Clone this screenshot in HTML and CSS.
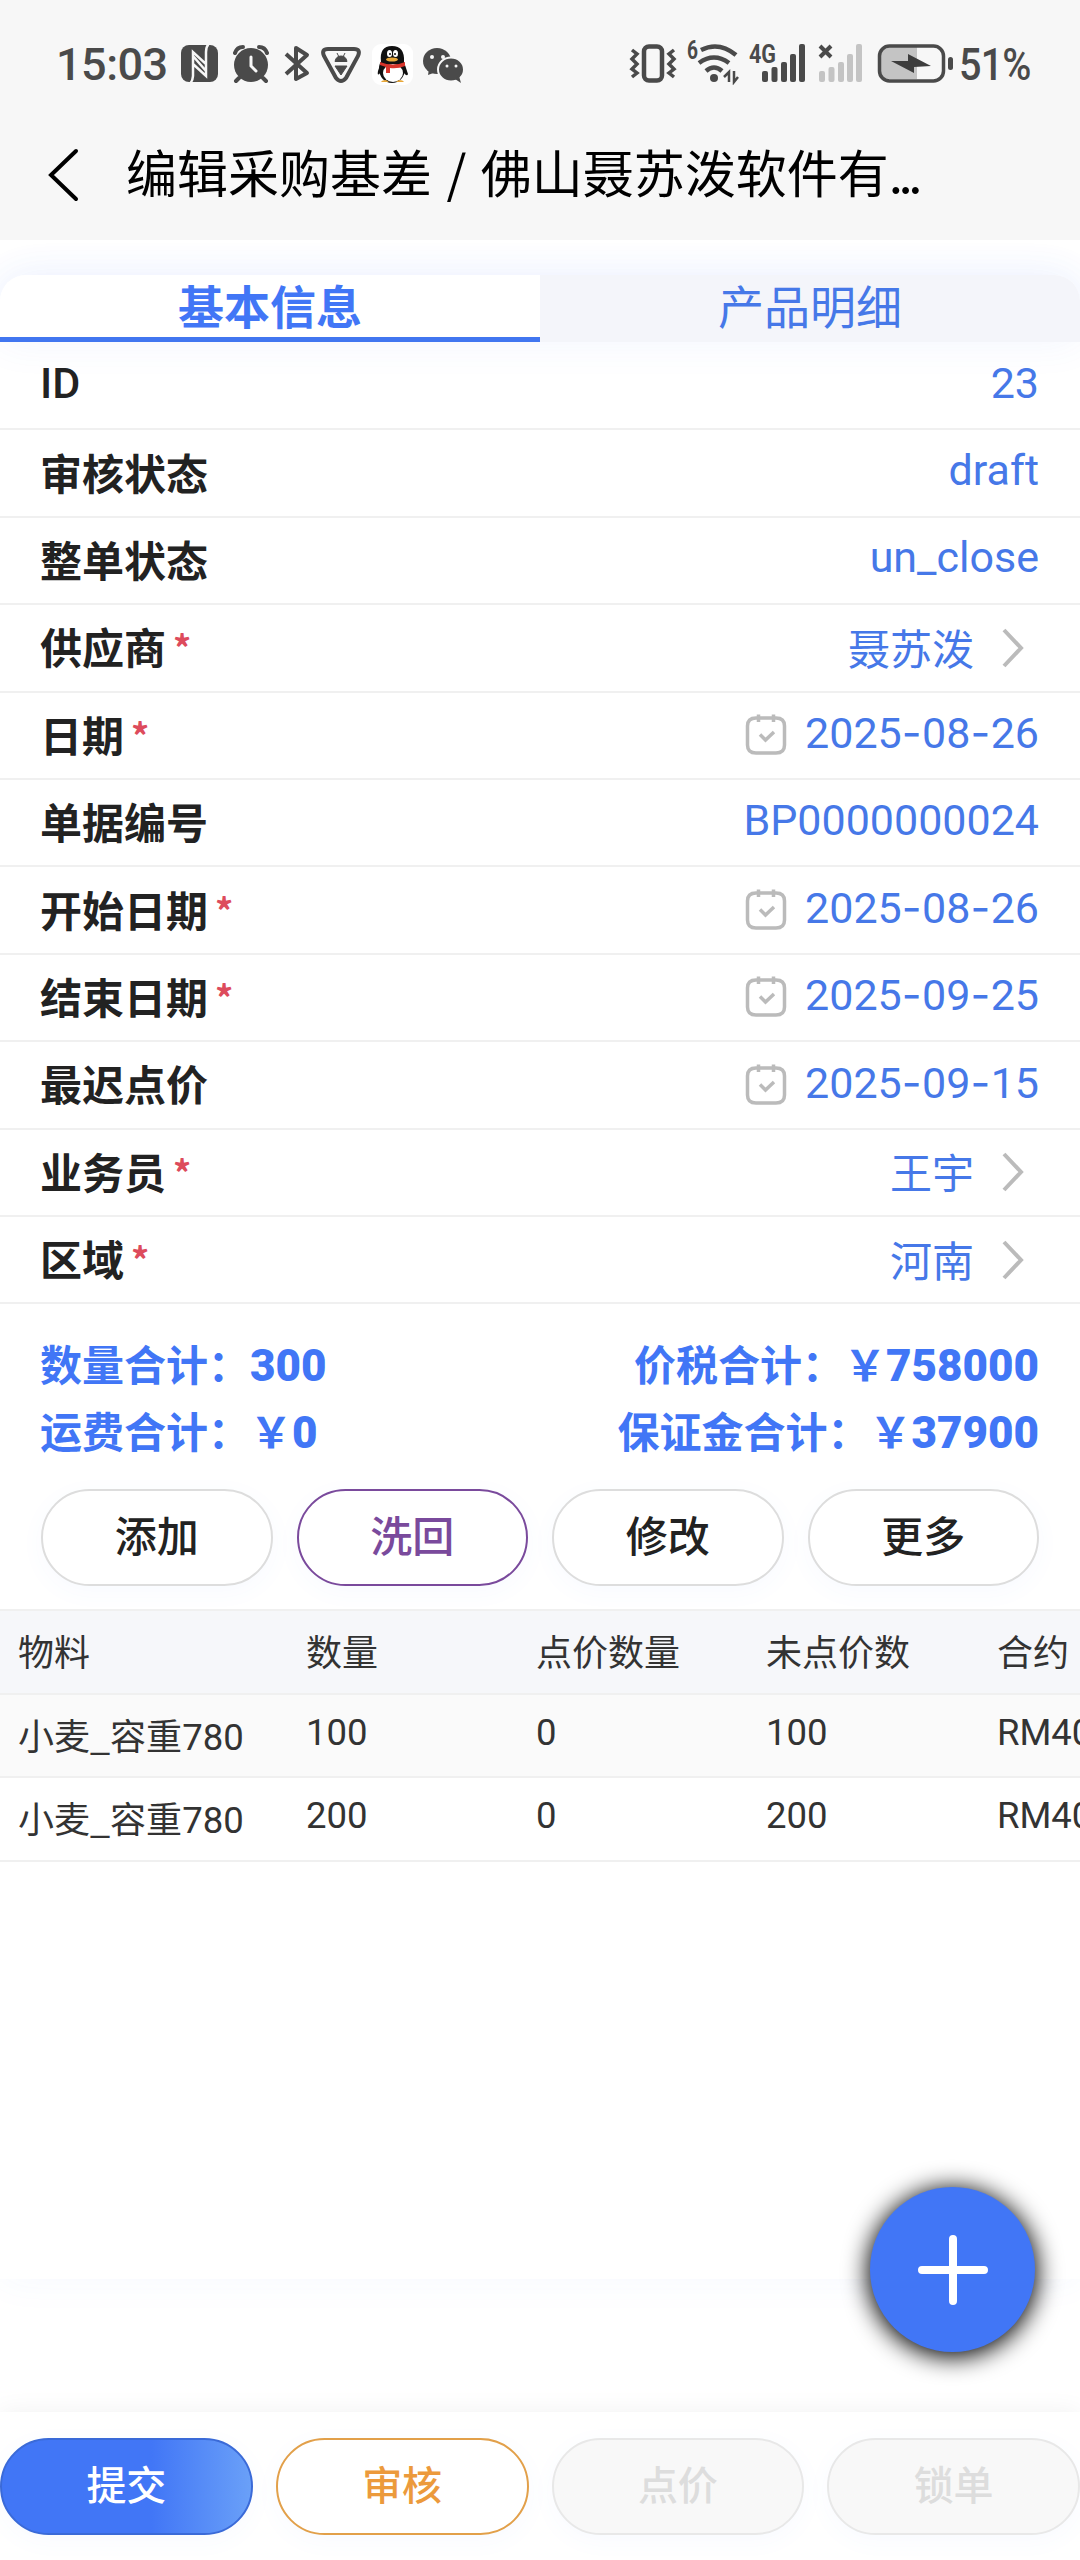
FILE: index.html
```html
<!DOCTYPE html>
<html lang="zh-CN">

<head>
    <meta charset="UTF-8">
    <meta name="viewport" content="width=device-width, initial-scale=1.0">
    <title>编辑采购基差</title>
    <link rel="stylesheet" href="styles.css">
</head>

<body>
    <svg class="defs">
        <symbol id="calendar" viewBox="0 0 42 42">
            <path d="M11 4H31Q39.500 4 39.500 12V31Q39.500 39 31 39H11Q2.500 39 2.500 31V12Q2.500 4 11 4ZM13.500 0.500V8M28.500 0.500V8M15 20.500l5.500 5.500 8.500-8" />
        </symbol>
        <symbol id="arrow" viewBox="0 0 24 42">
            <path d="M3 3L20 21 3 39" />
        </symbol>
    </svg>
    <header class="top">
        <div class="status">
            <span class="time">15:03</span>
            <svg class="status-left" width="300" height="50" viewBox="170 35 300 50">
                <!-- nfc -->
                <rect x="181" y="45" width="37" height="37" rx="8" fill="#4a4a4a" />
                <path d="M190 84Q193 80 193 76V52L206 64V71L193 56M209 43Q206 47 206 52V76L193 64" fill="none" stroke="#f7f7f7" stroke-width="2.500" />
                <!-- alarm -->
                <g fill="none" stroke="#4a4a4a" stroke-width="4" stroke-linecap="round">
                    <circle cx="251" cy="65" r="17" fill="#4a4a4a" stroke="none" />
                    <path d="M235 53Q237 47 243 47M267 53Q265 47 259 47M239 78l-3 3M263 78l3 3" />
                    <path d="M251 57V66L256 71" stroke="#f7f7f7" stroke-width="3" />
                </g>
                <!-- bluetooth -->
                <path d="M286 54L307 73 296 79V48L307 55 286 74" fill="none" stroke="#4a4a4a" stroke-width="4" stroke-linejoin="round" />
                <!-- debug shield -->
                <path d="M328 49H354Q361 49 358 56L346 78Q341 84 336 78L324 56Q321 49 328 49Z" fill="none" stroke="#4a4a4a" stroke-width="4" />
                <path d="M335 61.500Q336 56 341 56T347 61.500ZM335 66H347L341 75ZM337 53l2 4M345 53l-2 4" fill="#4a4a4a" stroke="#4a4a4a" />
                <!-- qq -->
                <rect x="372" y="44" width="41" height="41" rx="9" fill="#fff" />
                <ellipse cx="392" cy="69" rx="13" ry="14" fill="#111" />
                <path d="M381 62Q379 46 392 46T404 62L408 74Q407 77 404 73L401 70H383L380 73Q377 77 378 71Z" fill="#111" />
                <ellipse cx="393" cy="73" rx="10" ry="9" fill="#fff" />
                <ellipse cx="389.500" cy="53.500" rx="2.500" ry="3.500" fill="#fff" />
                <ellipse cx="395.500" cy="53.500" rx="2.500" ry="3.500" fill="#fff" />
                <circle cx="390" cy="54" r="1" fill="#111" />
                <circle cx="395" cy="54" r="1" fill="#111" />
                <ellipse cx="392" cy="59.500" rx="6" ry="2" fill="#e8a83a" />
                <path d="M380 62Q393 67 405 62V66Q398 69 390 68V73H386V67L380 65Z" fill="#d8352c" />
                <path d="M381 82Q382 80 386 80L389 82ZM396 82L399 80Q403 80 404 82Z" fill="#e8a83a" />
                <!-- wechat -->
                <g fill="#4a4a4a">
                    <ellipse cx="437" cy="61" rx="14" ry="13" />
                    <path d="M429 69L428 75 436 72Z" />
                    <ellipse cx="451" cy="69.500" rx="13" ry="12" stroke="#f7f7f7" stroke-width="2" />
                    <path d="M455 79L461 83 459 76Z" />
                </g>
                <g fill="#f7f7f7">
                    <circle cx="432" cy="57" r="2" />
                    <circle cx="443" cy="57" r="2" />
                    <circle cx="447" cy="66" r="1.500" />
                    <circle cx="456" cy="66" r="1.500" />
                </g>
            </svg>
            <svg class="status-right" width="325" height="50" viewBox="628 35 325 50">
                <g fill="none" stroke="#4a4a4a" stroke-width="4">
                    <!-- vibrate -->
                    <rect x="644" y="46.500" width="18" height="34" rx="5" stroke-width="4.500" />
                    <path d="M632 50L637 54 632 59 637 64 632 69 637 73 632 77M674 50L669 54 674 59 669 64 674 69 669 73 674 77" stroke-width="3.500" />
                    <!-- wifi -->
                    <path d="M701 50Q719 41 736 55M699 63Q714 52 729 63M706 71Q714 64 722 71" stroke-width="4.500" />
                    <circle cx="714" cy="78" r="4" fill="#4a4a4a" stroke="none" />
                    <path d="M729 82V72L724 77M734 71V82L738 77" stroke-width="2.500" />
                </g>
                <g class="status-small">
                    <text x="687" y="59" textLength="11" lengthAdjust="spacingAndGlyphs">6</text>
                    <text x="749" y="63" textLength="27" lengthAdjust="spacingAndGlyphs">4G</text>
                </g>
                <!-- signal -->
                <g fill="#4a4a4a">
                    <rect x="762" y="71" width="6" height="11" rx="2" />
                    <rect x="771.500" y="67" width="6" height="15" rx="2" />
                    <rect x="781" y="62" width="6" height="20" rx="2" />
                    <rect x="790" y="54" width="6" height="28" rx="2" />
                    <rect x="799" y="44" width="6" height="38" rx="2" />
                </g>
                <g fill="#c4c4c4">
                    <rect x="819" y="71" width="6" height="11" rx="2" />
                    <rect x="828.500" y="67" width="6" height="15" rx="2" />
                    <rect x="838" y="62" width="6" height="20" rx="2" />
                    <rect x="847" y="54" width="6" height="28" rx="2" />
                    <rect x="856" y="44" width="6" height="38" rx="2" />
                </g>
                <path d="M820 46L831 57M831 46L820 57" stroke="#4a4a4a" stroke-width="4" />
                <!-- battery -->
                <path d="M889 47H917V79H889Q880 79 880 70V56Q880 47 889 47Z" fill="#c4c4c4" />
                <rect x="879.500" y="46" width="64" height="35" rx="10" fill="none" stroke="#4a4a4a" stroke-width="3.500" />
                <rect x="948" y="57" width="5" height="13" rx="2.500" fill="#4a4a4a" />
                <path d="M891 61L908 61V54L931 66 914 67V73Z" fill="#3d3d3d" />
            </svg>
            <span class="battery">51%</span>
        </div>
        <div class="nav">
            <svg class="back" width="34" height="56" viewBox="0 0 34 56">
                <path d="M30 4L5 28 30 52" />
            </svg>
            <h1>编辑采购基差 / 佛山聂苏泼软件有<span class="dots">...</span></h1>
        </div>
    </header>

    <main class="card">
        <div class="tabs">
            <div class="tab active">基本信息</div>
            <div class="tab">产品明细</div>
        </div>
        <div class="form">
            <div class="row">
                <label class="latin">ID</label>
                <div class="value"><span class="num">23</span></div>
            </div>
            <div class="row">
                <label>审核状态</label>
                <div class="value"><span class="num">draft</span></div>
            </div>
            <div class="row">
                <label>整单状态</label>
                <div class="value"><span class="num">un_close</span></div>
            </div>
            <div class="row">
                <label>供应商<i>*</i></label>
                <div class="value"><span class="text">聂苏泼</span><svg class="arrow"><use href="#arrow" /></svg></div>
            </div>
            <div class="row">
                <label>日期<i>*</i></label>
                <div class="value"><svg class="calendar"><use href="#calendar" /></svg><span class="num">2025<i>-</i>08<i>-</i>26</span></div>
            </div>
            <div class="row">
                <label>单据编号</label>
                <div class="value"><span class="num">BP0000000024</span></div>
            </div>
            <div class="row">
                <label>开始日期<i>*</i></label>
                <div class="value"><svg class="calendar"><use href="#calendar" /></svg><span class="num">2025<i>-</i>08<i>-</i>26</span></div>
            </div>
            <div class="row">
                <label>结束日期<i>*</i></label>
                <div class="value"><svg class="calendar"><use href="#calendar" /></svg><span class="num">2025<i>-</i>09<i>-</i>25</span></div>
            </div>
            <div class="row">
                <label>最迟点价</label>
                <div class="value"><svg class="calendar"><use href="#calendar" /></svg><span class="num">2025<i>-</i>09<i>-</i>15</span></div>
            </div>
            <div class="row">
                <label>业务员<i>*</i></label>
                <div class="value"><span class="text">王宇</span><svg class="arrow"><use href="#arrow" /></svg></div>
            </div>
            <div class="row">
                <label>区域<i>*</i></label>
                <div class="value"><span class="text">河南</span><svg class="arrow"><use href="#arrow" /></svg></div>
            </div>
        </div>

        <div class="summary">
            <div class="summary-row">
                <span>数量合计：<b>300</b></span>
                <span>价税合计：￥<b>758000</b></span>
            </div>
            <div class="summary-row">
                <span>运费合计：￥<b>0</b></span>
                <span>保证金合计：￥<b>37900</b></span>
            </div>
        </div>

        <div class="actions">
            <button>添加</button>
            <button class="purple">洗回</button>
            <button>修改</button>
            <button>更多</button>
        </div>

        <div class="table">
            <div class="tr th">
                <div>物料</div>
                <div>数量</div>
                <div>点价数量</div>
                <div>未点价数</div>
                <div>合约</div>
            </div>
            <div class="tr odd">
                <div class="name">小麦_容重<span class="num">780</span></div>
                <div class="num">100</div>
                <div class="num">0</div>
                <div class="num">100</div>
                <div class="num">RM401</div>
            </div>
            <div class="tr">
                <div class="name">小麦_容重<span class="num">780</span></div>
                <div class="num">200</div>
                <div class="num">0</div>
                <div class="num">200</div>
                <div class="num">RM401</div>
            </div>
        </div>
    </main>

    <div class="fab">
        <svg width="72" height="72" viewBox="0 0 72 72">
            <path d="M36 5V67M5 36H67" />
        </svg>
    </div>

    <footer class="footer">
        <button class="submit">提交</button>
        <button class="orange">审核</button>
        <button disabled>点价</button>
        <button disabled>锁单</button>
    </footer>
</body>

</html>
```
FILE: styles.css
```css
* {
    box-sizing: border-box;
}

body {
    margin: 0;
    width: 1080px;
    height: 2560px;
    display: flex;
    flex-direction: column;
    overflow: hidden;
    background: #fff;
    font-family: "Noto Sans CJK SC", sans-serif;
    font-size: 42px;
    color: #222;
}

.defs {
    position: absolute;
    width: 0;
    height: 0;
}

/* Header */
.top {
    height: 240px;
    background: #f7f7f7;
}

.status {
    height: 130px;
    padding: 35px 0 0 56px;
    display: flex;
    color: #4a4a4a;
}

.time,
.battery {
    font-family: Roboto, sans-serif;
    font-weight: 500;
    font-size: 45px;
    line-height: 59px;
    white-space: nowrap;
}

.time {
    width: 114px;
    letter-spacing: -0.5px;
}

.battery {
    margin-left: 6px;
    letter-spacing: -1px;
    transform: scaleX(.88);
    transform-origin: left;
}

.status-right {
    margin-left: 158px;
}

.status-small {
    fill: #4a4a4a;
    font-family: Roboto, sans-serif;
    font-weight: 700;
    font-size: 25px;
}

.nav {
    display: flex;
    align-items: center;
    height: 90px;
    padding-left: 46px;
}

.back path {
    fill: none;
    stroke: #000;
    stroke-width: 4;
    stroke-linecap: round;
}

.nav h1 {
    margin: 0 0 0 46px;
    padding-bottom: 9px;
    font-size: 51px;
    line-height: 76px;
    font-weight: 400;
    word-spacing: 3px;
    color: #000;
}

.dots {
    letter-spacing: -4.5px;
}

/* Tabs */
.card {
    height: 2004px;
    margin-top: 35px;
    border-radius: 26px 26px 0 0;
    box-shadow: 0 0 42px rgba(65, 118, 246, .05);
}

.tabs {
    display: flex;
    height: 67px;
    border-radius: 26px 26px 0 0;
    box-shadow: 0 0 42px rgba(65, 118, 246, .07);
}

.tab {
    flex: 1;
    border-radius: 0 26px 0 0;
    background: #f4f5fa;
    color: #4678e8;
    font-size: 46px;
    line-height: 58px;
    text-align: center;
}

.tab.active {
    border-radius: 26px 0 0 0;
    background: linear-gradient(#fff 62px, #4176f0 62px);
    color: #4176f6;
    font-weight: 700;
}

/* Form */
.form {
    padding-top: 1px;
}

.row {
    display: flex;
    justify-content: space-between;
    align-items: center;
    height: 87.4px;
    padding: 0 41px 0 40px;
    border-bottom: 2px solid #f0f0f0;
}

.row label {
    display: flex;
    padding-bottom: 3px;
    font-weight: 700;
    line-height: 60px;
}

.row label.latin {
    font-family: Roboto, sans-serif;
    font-size: 43px;
    font-weight: 500;
    padding-bottom: 6px;
}

.row label i {
    margin-left: 7px;
    font-style: normal;
    font-size: 36px;
    color: #dd4b5c;
}

.value {
    display: flex;
    align-items: center;
    color: #4678e8;
}

.num {
    font-family: Roboto, sans-serif;
}

.value .num {
    padding-bottom: 6px;
    font-size: 43px;
}

/* wider hyphen between date parts */
.value .num i {
    font-family: Inter, sans-serif;
    font-style: normal;
    letter-spacing: .5px;
}

.value .text {
    padding-bottom: 3px;
}

.arrow {
    width: 24px;
    height: 42px;
    margin: 0 14px 0 27px;
    fill: none;
    stroke: #bbb;
    stroke-width: 4;
}

.calendar {
    width: 42px;
    height: 42px;
    margin-right: 18px;
    fill: none;
    stroke: #bbb;
    stroke-width: 3.5;
}

/* Summary */
.summary {
    padding: 25px 41px 0 40px;
    color: #4176f6;
    font-weight: 700;
}

.summary-row {
    display: flex;
    justify-content: space-between;
    height: 67px;
    line-height: 67px;
}

.summary b {
    font-family: Roboto, sans-serif;
    font-size: 44px;
}

/* Buttons */
button {
    flex: 1;
    height: 97px;
    padding: 0 0 8px;
    border: 2px solid #ddd;
    border-radius: 49px;
    background: #fff;
    box-shadow: 0 6px 24px rgba(65, 118, 246, .04);
    font: inherit;
    font-weight: 500;
    color: #222;
}

.actions {
    display: flex;
    gap: 24px;
    padding: 26px 41px 23px;
}

.actions .purple {
    border-color: #7a4a9c;
    color: #7a4a9c;
}

/* Table */
.table {
    overflow: hidden;
    border-top: 2px solid #f0f0f0;
    font-size: 36px;
    color: #333;
}

.tr {
    display: grid;
    grid-template-columns: 288px 230px 230px 231px 230px;
    height: 83.5px;
    border-bottom: 2px solid #f0f0f0;
    line-height: 78px;
}

.tr div {
    padding-left: 18px;
    white-space: nowrap;
}

.tr .num {
    font-size: 36.5px;
}

.tr > .num {
    line-height: 75px;
}

.th {
    background: #f6f7fa;
}

.odd {
    background: #fafafa;
}

/* Floating button */
.fab {
    position: absolute;
    left: 870px;
    top: 2187px;
    width: 165px;
    height: 165px;
    display: flex;
    align-items: center;
    justify-content: center;
    border-radius: 50%;
    background: #4176f6;
    box-shadow: 0 3px 24px 2px #000;
}

.fab path {
    stroke: #fff;
    stroke-width: 8;
    stroke-linecap: round;
}

/* Footer */
.footer {
    display: flex;
    gap: 23px;
    height: 148px;
    margin-top: auto;
    padding-top: 26px;
    background: #fff;
    box-shadow: 0 0 24px rgba(0, 0, 0, .06);
    font-size: 40px;
}

.submit {
    border-color: #3a6ad8;
    background: linear-gradient(90deg, #4176f6 60%, #6aa0f8);
    color: #fff;
}

.orange {
    border-color: #e2a04a;
    color: #ec9a3c;
}

button:disabled {
    border-color: #e8e8e8;
    background: #f8f8f8;
    color: #ddd;
}
```
